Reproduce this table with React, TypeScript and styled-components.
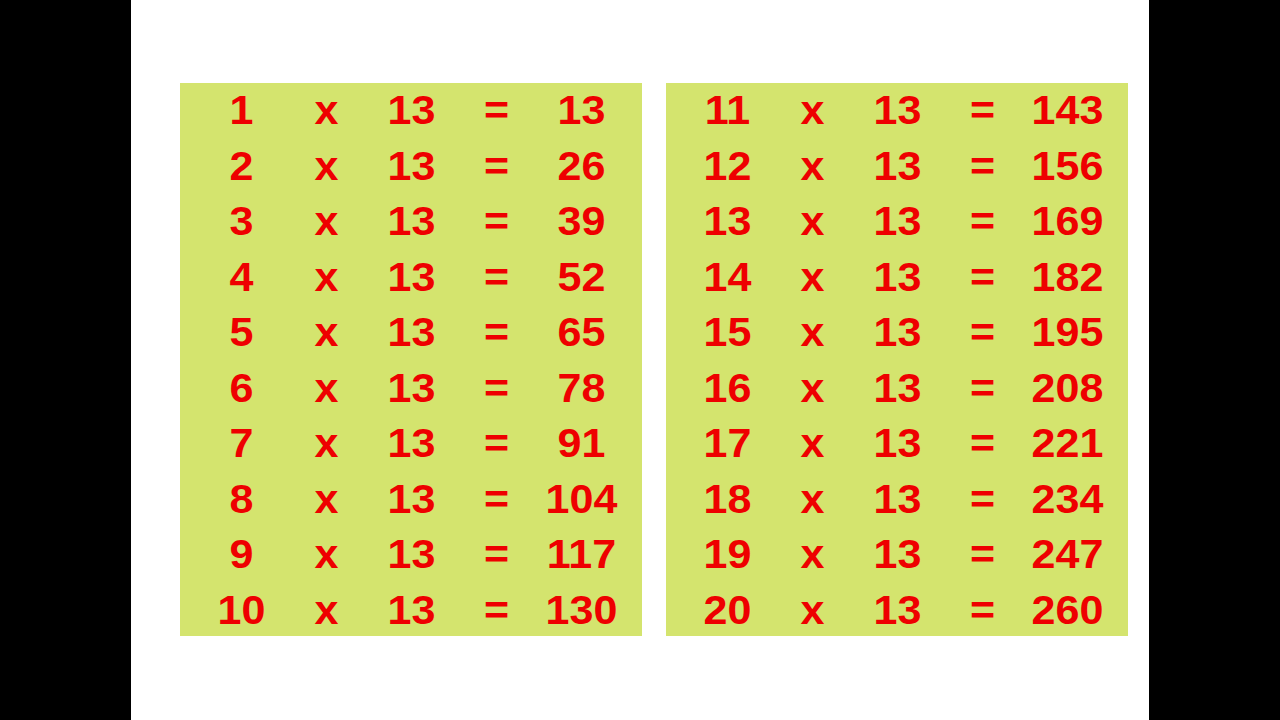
import React from "react";
import styled, { createGlobalStyle } from "styled-components";

const GlobalStyle = createGlobalStyle`
  html, body {
    margin: 0;
    padding: 0;
    background: #000;
  }
`;

const MULTIPLIER = 13;

const Screen = styled.div`
  width: 1280px;
  height: 720px;
  background: #000;
  display: flex;
  justify-content: center;
`;

const Slide = styled.div`
  width: 1018px;
  height: 720px;
  background: #fff;
  box-sizing: border-box;
  padding: 83px 0 0 49px;
  display: flex;
  align-items: flex-start;
  gap: 24.5px;
`;

const Panel = styled.div`
  width: 461.5px;
  height: 553px;
  background: #d4e46e;
  box-sizing: border-box;
  padding: 0 18px 0 18.5px;
  display: grid;
  grid-template-columns: repeat(5, 85px);
  grid-auto-rows: 55.5px;
  align-items: center;
  overflow: hidden;
`;

const Cell = styled.div`
  text-align: center;
  font-family: "Liberation Sans", Arial, sans-serif;
  font-weight: 700;
  font-size: 41px;
  line-height: 1;
  color: #ee0000;
  transform: scaleX(1.05);
`;

const Table: React.FC<{ from: number; to: number }> = ({ from, to }) => {
  const rows = [];
  for (let n = from; n <= to; n++) rows.push(n);
  return (
    <Panel>
      {rows.map((n) => (
        <React.Fragment key={n}>
          <Cell>{n}</Cell>
          <Cell>x</Cell>
          <Cell>{MULTIPLIER}</Cell>
          <Cell>=</Cell>
          <Cell>{n * MULTIPLIER}</Cell>
        </React.Fragment>
      ))}
    </Panel>
  );
};

export default function App() {
  return (
    <>
      <GlobalStyle />
      <Screen>
        <Slide>
          <Table from={1} to={10} />
          <Table from={11} to={20} />
        </Slide>
      </Screen>
    </>
  );
}
